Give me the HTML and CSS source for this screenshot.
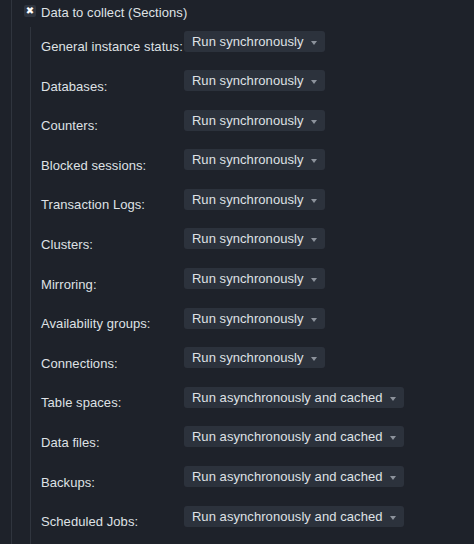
FILE: index.html
```html
<!DOCTYPE html>
<html>
<head>
<meta charset="utf-8">
<link rel="stylesheet" href="styles.css">
</head>
<body>
<div class="group">
  <div class="head">
    <span class="check">✖</span>
    <span class="title">Data to collect (Sections)</span>
  </div>
  <div class="sections">
    <div class="row"><span class="label">General instance status:</span><span class="select">Run synchronously<span class="caret"></span></span></div>
    <div class="row"><span class="label">Databases:</span><span class="select">Run synchronously<span class="caret"></span></span></div>
    <div class="row"><span class="label">Counters:</span><span class="select">Run synchronously<span class="caret"></span></span></div>
    <div class="row"><span class="label">Blocked sessions:</span><span class="select">Run synchronously<span class="caret"></span></span></div>
    <div class="row"><span class="label">Transaction Logs:</span><span class="select">Run synchronously<span class="caret"></span></span></div>
    <div class="row"><span class="label">Clusters:</span><span class="select">Run synchronously<span class="caret"></span></span></div>
    <div class="row"><span class="label">Mirroring:</span><span class="select">Run synchronously<span class="caret"></span></span></div>
    <div class="row"><span class="label">Availability groups:</span><span class="select">Run synchronously<span class="caret"></span></span></div>
    <div class="row"><span class="label">Connections:</span><span class="select">Run synchronously<span class="caret"></span></span></div>
    <div class="row"><span class="label">Table spaces:</span><span class="select">Run asynchronously and cached<span class="caret"></span></span></div>
    <div class="row"><span class="label">Data files:</span><span class="select">Run asynchronously and cached<span class="caret"></span></span></div>
    <div class="row"><span class="label">Backups:</span><span class="select">Run asynchronously and cached<span class="caret"></span></span></div>
    <div class="row"><span class="label">Scheduled Jobs:</span><span class="select">Run asynchronously and cached<span class="caret"></span></span></div>
  </div>
</div>
</body>
</html>
```

FILE: styles.css
```css
html, body {
  margin: 0;
  padding: 0;
  background: #1e222a;
  height: 100%;
  overflow: hidden;
}
body {
  font-family: "Liberation Sans", Arial, sans-serif;
  font-size: 13px;
  letter-spacing: 0.07px;
  color: #dfe1e5;
}
.group {
  margin-left: 11px;
  border-left: 1px solid #30353e;
  padding-left: 12px;
  height: 100%;
  box-sizing: border-box;
  display: flex;
  flex-direction: column;
}
.head {
  display: flex;
  align-items: flex-start;
  gap: 5px;
  height: 27px;
  flex: none;
  box-sizing: border-box;
  padding-top: 4px;
}
.check {
  width: 12px;
  height: 12px;
  background: #2f353f;
  border-radius: 2px;
  color: #ffffff;
  font-family: "DejaVu Sans", sans-serif;
  font-size: 10px;
  letter-spacing: 0;
  line-height: 12px;
  text-align: center;
  margin-top: 1px;
}
.title {
  line-height: 15px;
  margin-top: 1px;
}
.sections {
  flex: 1;
  margin-left: 6px;
  border-left: 1px solid #30353e;
  padding-left: 10px;
  padding-top: 3.5px;
  display: grid;
  grid-template-columns: max-content max-content;
  grid-auto-rows: 39.6px;
  column-gap: 1px;
  align-items: start;
  align-content: start;
}
.row {
  display: contents;
}
.label {
  line-height: 15px;
  padding-top: 8.5px;
}
.select {
  display: inline-flex;
  align-items: center;
  height: 21px;
  line-height: 21px;
  padding: 0 8px;
  background: #2c323c;
  border-radius: 3px;
  justify-self: start;
}
.caret {
  width: 0;
  height: 0;
  border-left: 3.5px solid transparent;
  border-right: 3.5px solid transparent;
  border-top: 4px solid #8d939c;
  margin-left: 7px;
  margin-top: 3px;
}
```
